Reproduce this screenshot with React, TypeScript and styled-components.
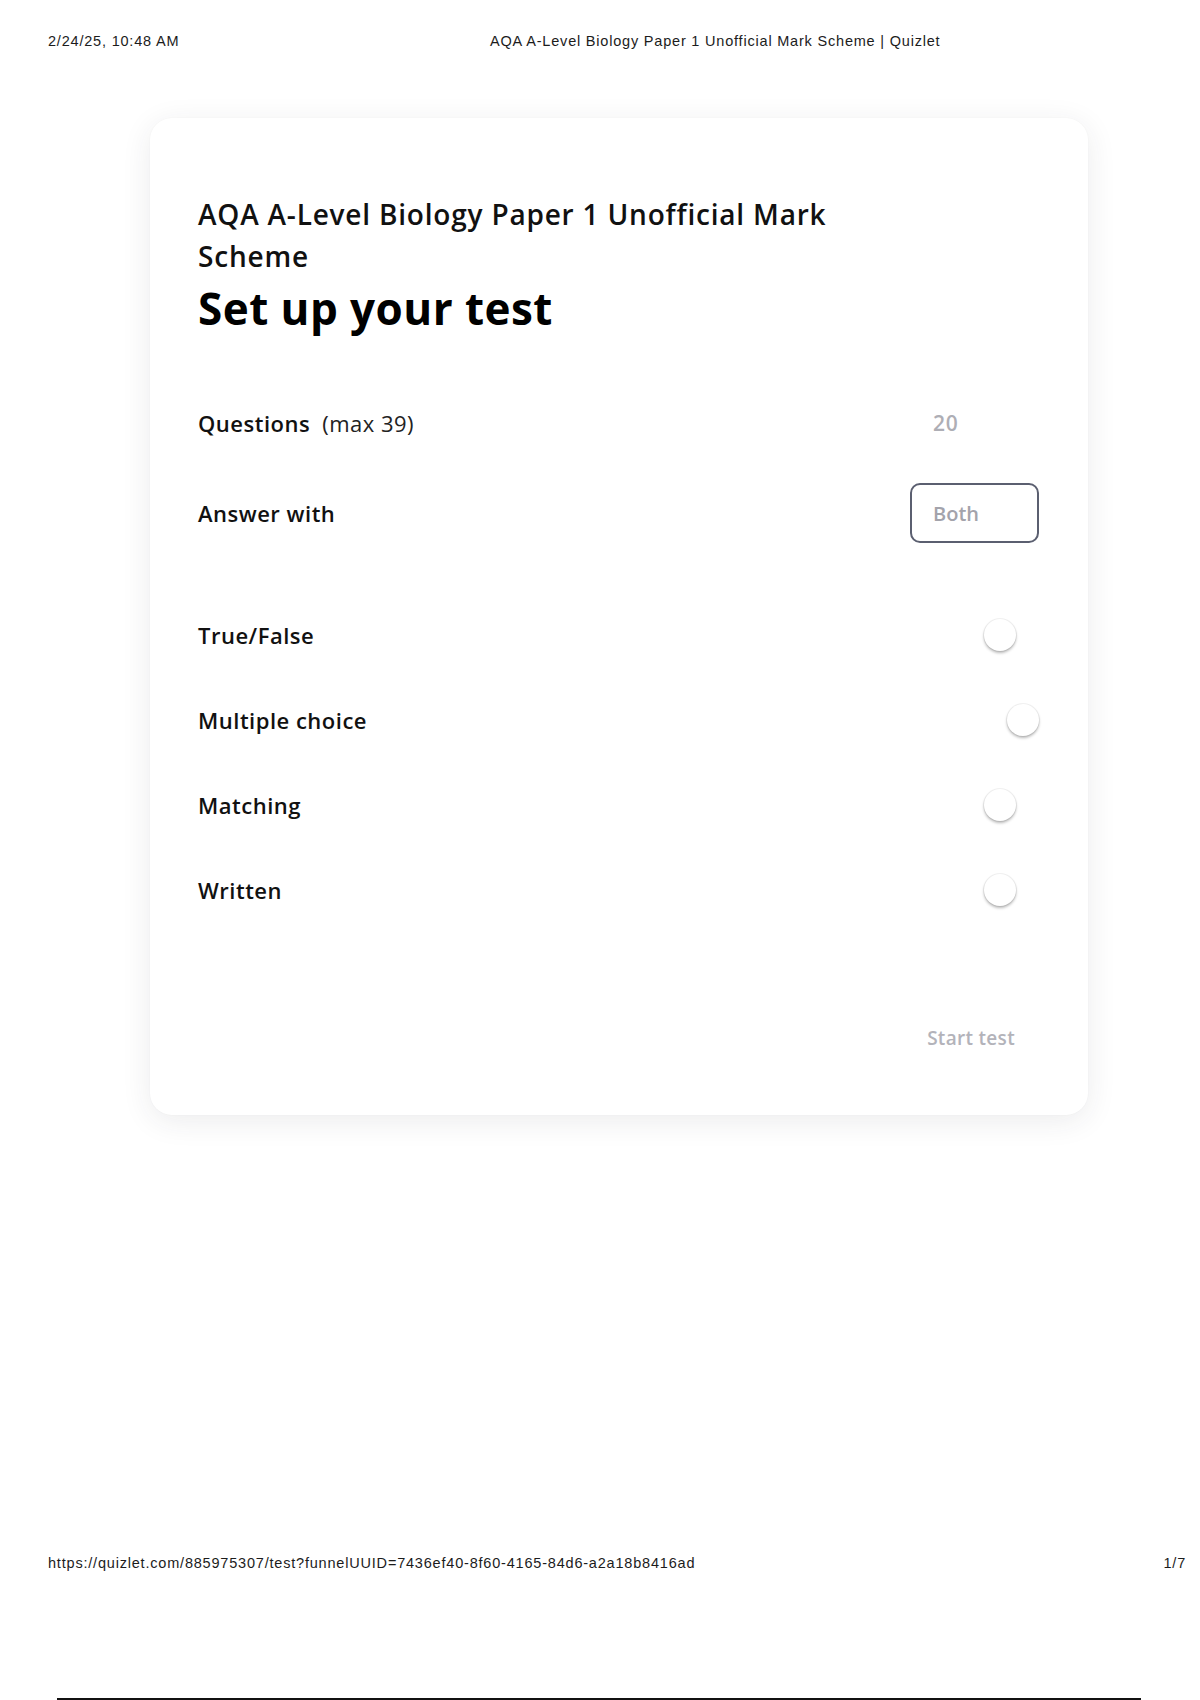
import React from "react";
import styled, { createGlobalStyle } from "styled-components";

const GlobalStyle = createGlobalStyle`
  html, body {
    margin: 0;
    padding: 0;
    background: #ffffff;
  }
  * { box-sizing: border-box; }
`;

const Page = styled.div`
  width: 1200px;
  min-height: 1700px;
  display: flex;
  flex-direction: column;
  background: #ffffff;
`;

const PrintHeader = styled.header`
  display: grid;
  grid-template-columns: 442px auto;
  padding: 32px 0 0 48px;
  font-family: "Liberation Sans", Arial, sans-serif;
  font-size: 14.5px;
  line-height: 18px;
  letter-spacing: 0.8px;
  color: #1c1c1c;
`;

const PrintText = styled.span`
  white-space: nowrap;
`;

const Card = styled.main`
  margin: 68px 0 0 150px;
  width: 938px;
  background: #ffffff;
  border-radius: 22px;
  box-shadow: 0 6px 30px rgba(40, 40, 60, 0.09), 0 0 2px rgba(40, 40, 60, 0.04);
  padding: 75px 49px 53px 48px;
  display: flex;
  flex-direction: column;
  font-family: "Open Sans", "Noto Sans", sans-serif;
  color: #0a092d;
`;

const SetTitle = styled.h2`
  margin: 0;
  max-width: 700px;
  font-size: 28px;
  line-height: 42px;
  font-weight: 600;
  letter-spacing: 0.8px;
  color: #111111;
`;

const Heading = styled.h1`
  margin: 5px 0 0;
  font-size: 44px;
  line-height: 52px;
  font-weight: 700;
  color: #000000;
  letter-spacing: 0.45px;
`;

const Settings = styled.section`
  display: flex;
  flex-direction: column;
  margin-top: 59px;
`;

const Row = styled.div<{ $h: number; $mt?: number }>`
  display: flex;
  align-items: center;
  justify-content: space-between;
  height: ${(p) => p.$h}px;
  margin-top: ${(p) => p.$mt ?? 0}px;
`;

const Label = styled.span`
  font-size: 22px;
  font-weight: 600;
  color: #111111;
  letter-spacing: 0.5px;
`;

const Hint = styled.span`
  font-weight: 400;
  margin-left: 12px;
  color: #222222;
`;

const FieldBox = styled.div<{ $bordered?: boolean }>`
  width: 129px;
  height: 60px;
  display: flex;
  align-items: center;
  padding-left: 21px;
  border-radius: 10px;
  border: 2px solid ${(p) => (p.$bordered ? "#5b5f70" : "transparent")};
  font-size: ${(p) => (p.$bordered ? 20 : 21)}px;
  font-weight: 600;
  letter-spacing: ${(p) => (p.$bordered ? 0 : 0.8)}px;
  color: ${(p) => (p.$bordered ? "#a3a3ab" : "#aeaeb5")};
`;

const Track = styled.div<{ $on?: boolean }>`
  width: 55px;
  height: 32px;
  display: flex;
  justify-content: ${(p) => (p.$on ? "flex-end" : "flex-start")};
  align-items: center;
`;

const Knob = styled.span`
  width: 32px;
  height: 32px;
  border-radius: 50%;
  background: #ffffff;
  box-shadow: 0 2px 3px rgba(0, 0, 0, 0.28), 0 0 0 1px rgba(0, 0, 0, 0.05);
`;

const Footer = styled.div`
  display: flex;
  justify-content: flex-end;
  margin-top: 96px;
`;

const StartButton = styled.button`
  height: 48px;
  border: none;
  background: transparent;
  padding: 0 24px;
  font-family: "Open Sans", "Noto Sans", sans-serif;
  font-size: 19px;
  font-weight: 600;
  letter-spacing: 0.3px;
  color: #b3b3ba;
`;

const PrintFooter = styled.footer`
  margin-top: auto;
  display: flex;
  justify-content: space-between;
  padding: 0 14px 0 48px;
  font-family: "Liberation Sans", Arial, sans-serif;
  font-size: 14.5px;
  line-height: 18px;
  letter-spacing: 0.8px;
  color: #1c1c1c;
`;

const PageRule = styled.hr`
  margin: 126px 59px 0 57px;
  height: 2px;
  border: none;
  background: #111111;
`;

const toggles = [
  { label: "True/False", on: false },
  { label: "Multiple choice", on: true },
  { label: "Matching", on: false },
  { label: "Written", on: false },
];

export default function App() {
  return (
    <Page>
      <GlobalStyle />
      <PrintHeader>
        <PrintText>2/24/25, 10:48 AM</PrintText>
        <PrintText>AQA A-Level Biology Paper 1 Unofficial Mark Scheme | Quizlet</PrintText>
      </PrintHeader>

      <Card>
        <SetTitle>AQA A-Level Biology Paper 1 Unofficial Mark Scheme</SetTitle>
        <Heading>Set up your test</Heading>

        <Settings>
          <Row $h={60}>
            <Label>
              Questions<Hint>(max 39)</Hint>
            </Label>
            <FieldBox>20</FieldBox>
          </Row>
          <Row $h={60} $mt={30}>
            <Label>Answer with</Label>
            <FieldBox $bordered>Both</FieldBox>
          </Row>
          {toggles.map((t, i) => (
            <Row key={t.label} $h={56} $mt={i === 0 ? 64 : 29}>
              <Label>{t.label}</Label>
              <Track $on={t.on} role="switch" aria-checked={t.on}>
                <Knob />
              </Track>
            </Row>
          ))}
        </Settings>

        <Footer>
          <StartButton>Start test</StartButton>
        </Footer>
      </Card>

      <PrintFooter>
        <PrintText>https://quizlet.com/885975307/test?funnelUUID=7436ef40-8f60-4165-84d6-a2a18b8416ad</PrintText>
        <PrintText>1/7</PrintText>
      </PrintFooter>
      <PageRule />
    </Page>
  );
}
